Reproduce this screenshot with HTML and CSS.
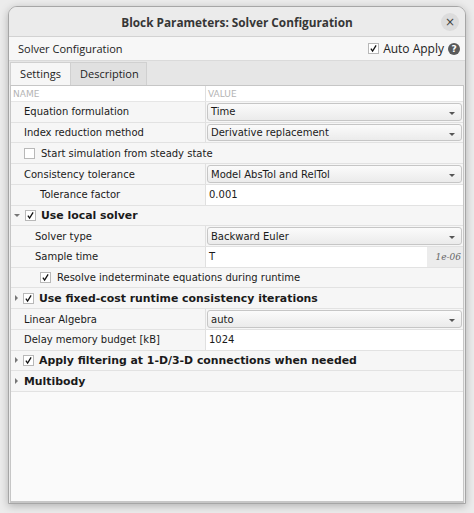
FILE: index.html
```html
<!DOCTYPE html>
<html>
<head>
<meta charset="utf-8">
<link rel="stylesheet" href="styles.css">
</head>
<body>
<div class="window">
  <div class="titlebar">
    <span class="title">Block Parameters: Solver Configuration</span>
    <span class="close">×</span>
  </div>
  <div class="toolbar">
    <span class="blockname">Solver Configuration</span>
    <label class="autoapply"><span class="cb checked"><svg viewBox="0 0 11 11"><path d="M2.3 5.6 L4.4 8.6 L8.7 1.8" /></svg></span>Auto Apply</label>
    <span class="help">?</span>
  </div>
  <div class="tabs">
    <span class="tab active">Settings</span>
    <span class="tab">Description</span>
  </div>
  <div class="panel">
    <div class="row head"><div class="name">NAME</div><div class="value">VALUE</div></div>

    <div class="row"><div class="name l1">Equation formulation</div><div class="value"><div class="combo">Time</div></div></div>
    <div class="row"><div class="name l1">Index reduction method</div><div class="value"><div class="combo">Derivative replacement</div></div></div>
    <div class="row full"><div class="check l1"><span class="cb"></span>Start simulation from steady state</div></div>
    <div class="row"><div class="name l1">Consistency tolerance</div><div class="value"><div class="combo">Model AbsTol and RelTol</div></div></div>
    <div class="row"><div class="name l2">Tolerance factor</div><div class="value edit">0.001</div></div>

    <div class="row full group"><span class="tri open"></span><span class="cb checked"><svg viewBox="0 0 11 11"><path d="M2.3 5.6 L4.4 8.6 L8.7 1.8" /></svg></span><b>Use local solver</b></div>
    <div class="row"><div class="name l15">Solver type</div><div class="value"><div class="combo">Backward Euler</div></div></div>
    <div class="row"><div class="name l15">Sample time</div><div class="value edit">T<span class="unit">1e-06</span></div></div>
    <div class="row full"><div class="check l2"><span class="cb checked"><svg viewBox="0 0 11 11"><path d="M2.3 5.6 L4.4 8.6 L8.7 1.8" /></svg></span>Resolve indeterminate equations during runtime</div></div>

    <div class="row full group"><span class="tri"></span><span class="cb checked"><svg viewBox="0 0 11 11"><path d="M2.3 5.6 L4.4 8.6 L8.7 1.8" /></svg></span><b>Use fixed-cost runtime consistency iterations</b></div>
    <div class="row"><div class="name l1">Linear Algebra</div><div class="value"><div class="combo">auto</div></div></div>
    <div class="row"><div class="name l1">Delay memory budget [kB]</div><div class="value edit">1024</div></div>

    <div class="row full group"><span class="tri"></span><span class="cb checked"><svg viewBox="0 0 11 11"><path d="M2.3 5.6 L4.4 8.6 L8.7 1.8" /></svg></span><b>Apply filtering at 1-D/3-D connections when needed</b></div>
    <div class="row full group"><span class="tri"></span><b>Multibody</b></div>
  </div>
</div>
</body>
</html>
```
FILE: styles.css
```css
* { box-sizing: border-box; }
html, body { margin: 0; padding: 0; }
body {
  background: #ececec;
  width: 474px;
  height: 513px;
  padding-top: 6px;
  font-family: "DejaVu Sans", sans-serif;
  color: #1a1a1a;
}
.window {
  margin-left: 8px;
  width: 458px;
  height: 498px;
  border: 1px solid #a6a6a6;
  border-radius: 9px 9px 0 0;
  background: #ebebeb;
  box-shadow: 0 2px 8px rgba(0,0,0,0.25);
  display: flex;
  flex-direction: column;
  overflow: hidden;
}
.titlebar {
  height: 30px;
  flex: none;
  display: flex;
  align-items: center;
  justify-content: center;
  position: relative;
  border-bottom: 1px solid #d2d2d2;
  background: #ebebeb;
}
.title {
  font-family: "Open Sans", sans-serif;
  font-weight: 700;
  font-size: 11.8px;
  color: #363636;
  padding-top: 1px;
}
.close {
  position: absolute;
  right: 6px;
  top: 6px;
  width: 18px;
  height: 18px;
  border-radius: 50%;
  background: #dcdcdc;
  color: #444;
  font-family: "DejaVu Sans", sans-serif;
  font-size: 12px;
  line-height: 18px;
  text-align: center;
}
.toolbar {
  height: 24px;
  flex: none;
  display: flex;
  align-items: center;
  padding: 0 5px 0 9px;
  background: #f7f7f7;
  border-bottom: 1px solid #dadada;
  font-family: "Open Sans", sans-serif;
  font-size: 11px;
  color: #222;
}
.blockname { flex: 1; }
.autoapply { display: flex; align-items: center; gap: 4px; margin-right: 4px; font-size: 12px; }
.help {
  width: 12px;
  height: 12px;
  border-radius: 50%;
  background: #5a5a5a;
  color: #fff;
  font-family: "DejaVu Sans", sans-serif;
  font-weight: 700;
  font-size: 9px;
  line-height: 12px;
  text-align: center;
}
.tabs {
  height: 24px;
  flex: none;
  display: flex;
  align-items: flex-end;
  padding-left: 1px;
  background: #e6e6e6;
  font-family: "Open Sans", sans-serif;
  font-size: 11px;
  color: #222;
}
.tab {
  height: 23px;
  line-height: 21px;
  padding: 0 9px;
  border: 1px solid #d0d0d0;
  border-bottom: none;
  background: #e0e0e0;
  width: 77px;
  text-align: center;
}
.tab.active {
  background: #f6f6f6;
  width: 60px;
  padding: 0;
  border-right: none;
}
.panel {
  flex: 1;
  margin: 0 1px;
  border: 1px solid #c6c6c6;
  border-bottom: 2px solid #c6c6c6;
  background: #fafafa;
  font-size: 10px;
}
.row {
  height: 20.72px;
  display: flex;
  align-items: stretch;
  border-bottom: 1px solid #e2e2e2;
  background: #f6f6f6;
}
.row.head {
  height: 16px;
  background: #fff;
  color: #b4b4b4;
  font-size: 9px;
  border-bottom: 1px solid #e6e6e6;
}
.row.head .name, .row.head .value { padding-left: 2px; }
.name {
  width: 195px;
  flex: none;
  display: flex;
  align-items: center;
  border-right: 1px solid #e0e0e0;
  white-space: nowrap;
}
.value {
  flex: 1;
  display: flex;
  align-items: center;
  padding: 1px;
}
.l1 { padding-left: 13px; }
.l15 { padding-left: 24px; }
.l2 { padding-left: 29px; }
.value.edit {
  background: #fff;
  padding-left: 3px;
  position: relative;
}
.unit {
  position: absolute;
  right: 0;
  top: 0;
  bottom: 0;
  width: 36px;
  background: #ececec;
  color: #666;
  font-style: italic;
  font-family: "DejaVu Serif", serif;
  font-size: 9px;
  display: flex;
  align-items: center;
  justify-content: flex-end;
  padding-right: 2px;
}
.combo {
  flex: 1;
  height: 100%;
  border: 1px solid #c6c6c6;
  border-radius: 3px;
  background: linear-gradient(#fbfbfb, #ebebeb);
  display: flex;
  align-items: center;
  padding-left: 3px;
  position: relative;
}
.combo::after {
  content: "";
  position: absolute;
  right: 6px;
  top: 8px;
  border-left: 3px solid transparent;
  border-right: 3px solid transparent;
  border-top: 3px solid #555;
}
.check {
  display: flex;
  align-items: center;
  gap: 6px;
  white-space: nowrap;
}
.row.full { align-items: center; }
.cb {
  width: 11px;
  height: 11px;
  flex: none;
  border: 1px solid #b8b8b8;
  background: #fff;
  display: inline-block;
  position: relative;
}
.cb svg {
  position: absolute;
  left: 0;
  top: 0;
  width: 9px;
  height: 9px;
}
.cb svg path {
  fill: none;
  stroke: #111;
  stroke-width: 1.6;
}
.group { white-space: nowrap; }
.group b { font-weight: 700; font-size: 10.9px; margin-left: 5px; }
.group .tri + b { margin-left: 6px; }
.group .tri + .cb { margin-left: 5px; }
.tri {
  margin-left: 4px;
  width: 0;
  height: 0;
  border-top: 3px solid transparent;
  border-bottom: 3px solid transparent;
  border-left: 3px solid #777;
}
.tri.open {
  border-left: 3px solid transparent;
  border-right: 3px solid transparent;
  border-top: 3px solid #777;
  border-bottom: none;
  margin-left: 3px;
}
.tri.open + .cb { margin-left: 5px; }
```
